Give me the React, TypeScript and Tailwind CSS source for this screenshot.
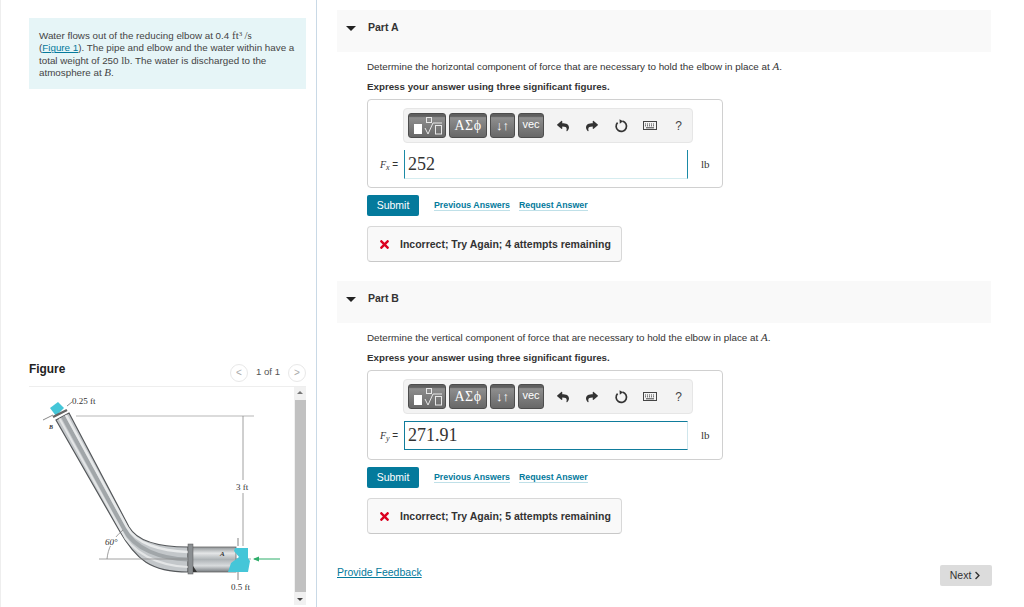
import React from "react";
import { FaReply, FaShare, FaTimes, FaChevronRight } from "react-icons/fa";

const serif = "font-['Liberation_Serif',serif]";

function Btn({ w, children }: { w: string; children: React.ReactNode }) {
  return (
    <div className={`${w} h-[25px] rounded-[3px] border border-[#4d4d4d] bg-[linear-gradient(#5f5f5f_0%,#5f5f5f_10%,#8e8e8e_16%,#7c7c7c_55%,#686868_100%)] flex items-center justify-center text-white`}>
      {children}
    </div>
  );
}

function Toolbar() {
  return (
    <div className="ml-[35px] w-[290px] h-[35px] rounded-[4px] border border-[#e6e6e6] bg-[#f3f3f3] flex items-center pl-[4px]">
      <div className="flex gap-[3px]">
        <Btn w="w-[38px]">
          <svg width="36" height="23" viewBox="0 0 36 23" fill="none">
            <rect x="5" y="10" width="8" height="10" fill="#fff" />
            <rect x="17.5" y="3.5" width="5" height="5" stroke="#e8e8e8" />
            <path d="M16 14l3 6 5-11h9" stroke="#e8e8e8" />
            <rect x="26.5" y="11.5" width="6" height="8.5" stroke="#e8e8e8" />
          </svg>
        </Btn>
        <Btn w="w-[38px]"><span className={`${serif} text-[14px] leading-none tracking-[0.5px]`}>ΑΣϕ</span></Btn>
        <Btn w="w-[25px]"><span className="text-[13px] leading-none">↓↑</span></Btn>
        <Btn w="w-[26px]"><span className="text-[11px] leading-none mb-[3px]">vec</span></Btn>
      </div>
      <div className="ml-[4px] flex items-center text-[#333]">
        <span className="w-[29px] flex justify-center"><FaReply size={12} /></span>
        <span className="w-[29px] flex justify-center"><FaShare size={12} /></span>
        <span className="w-[29px] flex justify-center">
          <svg width="14" height="14" viewBox="0 0 14 14" fill="none" stroke="#333" strokeWidth="1.7">
            <path d="M8.5 2.2A5.2 5.2 0 1 1 3.6 3.6" />
            <path d="M5.5 0.2L9 2.2L5.8 4.8Z" fill="#333" stroke="none" />
          </svg>
        </span>
        <span className="w-[29px] flex justify-center">
          <svg width="14" height="9" viewBox="0 0 14 9" fill="none" stroke="#444" strokeWidth="1">
            <rect x="0.5" y="0.5" width="13" height="8" />
            <path d="M2 3h10M2 4.8h10" strokeDasharray="1 1" />
            <path d="M3 6.8h8" />
          </svg>
        </span>
        <span className="w-[29px] text-center text-[12px] text-[#444]">?</span>
      </div>
    </div>
  );
}

function AnswerBox({ sub, value, partA }: { sub: string; value: string; partA?: boolean }) {
  return (
    <div className={`mt-[6px] w-[356px] ${partA ? "h-[89px]" : "h-[90px]"} rounded-[4px] border border-[#d0d0d0] pt-[8px]`}>
      <Toolbar />
      <div className="mt-[7px] flex items-center h-[29px]">
        <span className={`w-[36px] text-right pr-[6px] text-[10px] leading-none text-[#333] ${serif}`}>
          <i>F</i><sub className="text-[8px] leading-[0]"><i>{sub}</i></sub> <span className="font-['Liberation_Sans',sans-serif]">=</span>
        </span>
        <div className={`w-[284px] h-[29px] flex items-center pl-[3px] text-[18px] text-[#333] ${serif} ${partA ? "border-x border-x-[#1a8aa6] border-b border-b-[#d5ecef]" : "border-y border-y-[#0f7c9c] border-r border-r-[#cfe6ec] border-l border-l-[#0f7c9c]"}`}>
          {value}
        </div>
        <span className={`ml-[13px] text-[11px] text-[#333] ${serif}`}>lb</span>
      </div>
    </div>
  );
}

function Part({ name, q, sub, value, attempts, partA }: { name: string; q: string; sub: string; value: string; attempts: number; partA?: boolean }) {
  return (
    <section>
      <div className="h-[42px] bg-[#f9f9f9] flex items-center pl-[9px] pb-[6px]">
        <span className="w-0 h-0 border-x-[5px] border-x-transparent border-t-[5px] border-t-[#222]" />
        <span className="ml-[12px] text-[10.5px] font-bold text-[#333]">{name}</span>
      </div>
      <div className="pl-[30px]">
        <p className="mt-[8px] text-[9.85px] leading-[13px] text-[#333]">
          Determine the {q} component of force that are necessary to hold the elbow in place at <i className={`${serif} text-[11px]`}>A</i>.
        </p>
        <p className="mt-[7px] text-[9.76px] leading-[13px] font-bold text-[#333]">Express your answer using three significant figures.</p>
        <AnswerBox sub={sub} value={value} partA={partA} />
        <div className="mt-[7px] flex items-center">
          <button className="w-[52px] h-[21px] rounded-[2px] bg-[#047a9c] text-white text-[10.5px]">Submit</button>
          <a className="ml-[15px] text-[8.8px] font-bold text-[#047a9c] border-b border-[#bfe0e8] leading-[10px]">Previous Answers</a>
          <a className="ml-[9px] text-[8.8px] font-bold text-[#047a9c] border-b border-[#bfe0e8] leading-[10px]">Request Answer</a>
        </div>
        <div className="mt-[10px] w-[255px] h-[36px] rounded-[4px] border border-[#d8d8d8] border-b-[#c8c8c8] bg-[#f9f9f9] flex items-center pl-[10px] pt-[1px]">
          <FaTimes size={13} color="#db0020" />
          <span className="ml-[9px] text-[10.5px] font-bold text-[#333] whitespace-nowrap">Incorrect; Try Again; {attempts} attempts remaining</span>
        </div>
      </div>
    </section>
  );
}

function Figure() {
  return (
    <svg width="265" height="218" viewBox="28 387 265 218" className="shrink-0" fontFamily="'Liberation Serif',serif" fill="#333">
      <defs>
        <linearGradient id="h" x1="0" y1="0" x2="0" y2="1">
          <stop offset="0" stopColor="#8f9497" />
          <stop offset="0.25" stopColor="#e4e6e7" />
          <stop offset="0.5" stopColor="#aeb3b6" />
          <stop offset="0.75" stopColor="#d9dcde" />
          <stop offset="1" stopColor="#777c80" />
        </linearGradient>
      </defs>
      <path d="M75 416H253" stroke="#cfcfcf" strokeWidth="1.5" />
      <path d="M242 416V480M242 493V546" stroke="#888" strokeWidth="0.8" />
      <path d="M237 538V546M237 572V580" stroke="#666" strokeWidth="0.8" />
      <path d="M55 420L68 413L128 527C136 541 155 547 187 547V572C150 572 135 560 118 530Z" fill="#c3c7ca" stroke="#55585b" strokeWidth="1.2" />
      <path d="M62 416.5L123 528.5C133 549 160 559 187 559.5" fill="none" stroke="#a1a6a9" strokeWidth="4" />
      <path d="M58.5 418.5L120 530C130 553 158 566 187 567" fill="none" stroke="#e3e5e6" strokeWidth="2" />
      <path d="M65 415L126 527C135 544 160 551 187 552" fill="none" stroke="#e8eaeb" strokeWidth="2.5" />
      <path d="M98 559H250" stroke="#8a8a8a" strokeWidth="0.8" />
      <rect x="191" y="547" width="44" height="25" fill="url(#h)" stroke="#666" strokeWidth="0.8" />
      <rect x="187" y="544" width="5" height="30" fill="#8b8f92" stroke="#555" strokeWidth="0.5" />
      <path d="M192 572L196 572L192 566Z" fill="#333" />
      <path d="M234 548H247V558L249 561L247 572H227L230 563L238 557L233 551Z" fill="#45c6d8" />
      <path d="M49 408L57 402L63 408L55 416Z" fill="#45c6d8" />
      <path d="M52 417L66 410" stroke="#666" strokeWidth="2.5" />
      <path d="M42 420L52 415M66 406L71 402" stroke="#555" strokeWidth="0.7" />
      <path d="M253 559L279 559" stroke="#2fae6b" strokeWidth="1" />
      <path d="M252 559L258 556.5V561.5Z" fill="#2fae6b" />
      <path d="M106 559C107 549 111 539 122 530" fill="none" stroke="#777" strokeWidth="0.7" />
      <rect x="103" y="537" width="16" height="9" fill="#fff" />
      <text x="71" y="404" fontSize="9">0.25 ft</text>
      <text x="48" y="429" fontSize="6" fontStyle="italic" fontWeight="bold">B</text>
      <text x="235" y="490" fontSize="9">3 ft</text>
      <text x="104" y="545" fontSize="9" fontStyle="italic">60°</text>
      <text x="219" y="556" fontSize="7" fontStyle="italic" fontWeight="bold">A</text>
      <text x="230" y="590" fontSize="9">0.5 ft</text>
    </svg>
  );
}

export default function App() {
  return (
    <div className="w-[1024px] h-[607px] overflow-hidden flex bg-white font-['Liberation_Sans',sans-serif] text-[#333]">
      <aside className="w-[317px] h-full shrink-0 border-l border-l-[#eeeeee] border-r border-r-[#c9d9e6] pl-[28px] pr-[10px] pt-[18px] flex flex-col">
        <div className="w-[277px] h-[71px] bg-[#e6f5f7] pl-[10px] pt-[12px] text-[9.8px] leading-[12.4px] text-[#444] whitespace-nowrap">
          Water flows out of the reducing elbow at 0.4 <span className={`${serif} text-[11px] leading-[0]`}>ft<sup className="text-[7px] leading-[0]">3</sup>&thinsp;/s</span>
          <br />
          (<a className="text-[#047a9c] underline">Figure 1</a>). The pipe and elbow and the water within have a
          <br />
          total weight of 250 <span className={`${serif} text-[11px] leading-[0]`}>lb</span>. The water is discharged to the
          <br />
          atmosphere at <i className={`${serif} text-[11px] leading-[0]`}>B</i>.
        </div>
        <div className="mt-[272px] h-[26px] flex items-center justify-between border-b border-[#eeeeee] w-[277px] pb-[7px]">
          <span className="text-[11.9px] font-bold text-[#222]">Figure</span>
          <div className="flex items-center text-[9.6px] text-[#555] mt-[5px]">
            <span className="w-[18px] h-[18px] rounded-full border border-[#e8e8e8] flex items-center justify-center text-[#aaa] text-[10px]">&lt;</span>
            <span className="mx-[8px]">1 of 1</span>
            <span className="w-[18px] h-[18px] rounded-full border border-[#e8e8e8] flex items-center justify-center text-[#aaa] text-[10px]">&gt;</span>
          </div>
        </div>
        <div className="flex w-[277px] h-[218px]">
          <Figure />
          <div className="w-[12px] h-full bg-[#f1f1f1] flex flex-col items-center justify-between py-[1px]">
            <span className="mt-[3px] w-0 h-0 border-x-[3px] border-x-transparent border-b-[3px] border-b-[#777]" />
            <div className="flex-1 w-[11px] mt-[6px] mb-[6px] bg-[#c1c1c1]" />
            <span className="mb-[3px] w-0 h-0 border-x-[3px] border-x-transparent border-t-[3px] border-t-[#444]" />
          </div>
        </div>
      </aside>
      <main className="flex-1 pl-[20px] pr-[33px] pt-[10px]">
        <Part name="Part A" q="horizontal" sub="x" value="252" attempts={4} partA />
        <div className="h-[19px]" />
        <Part name="Part B" q="vertical" sub="y" value="271.91" attempts={5} />
        <div className="mt-[31px] flex items-start justify-between">
          <a className="text-[10.5px] text-[#047a9c] underline">Provide Feedback</a>
          <button className="w-[52px] h-[21px] bg-[#dcdcdc] rounded-[2px] text-[10.5px] text-[#333] flex items-center justify-center gap-[2px] mr-[-1px]">
            Next <FaChevronRight size={9} />
          </button>
        </div>
      </main>
    </div>
  );
}
